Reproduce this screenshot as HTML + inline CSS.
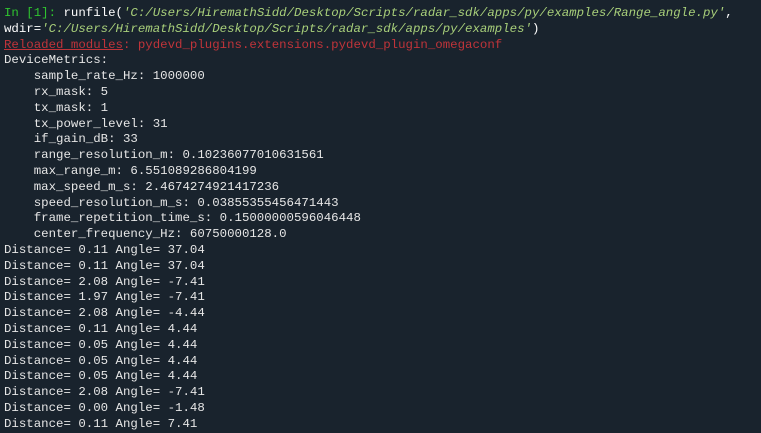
<!DOCTYPE html>
<html><head><style>
html,body{margin:0;padding:0;background:#19232d;width:761px;height:433px;overflow:hidden}
pre{margin:0;padding:6px 0 0 4px;font-family:"Liberation Mono",monospace;font-size:12.4px;line-height:15.8px;color:#e6e6e6;white-space:pre}
.g{color:#2fc42f}.w{color:#fff}.s{color:#a8cf7a;font-style:italic}.r{color:#c0343a}.u{text-decoration:underline}
</style></head><body><pre><span class="g">In [1]:</span> <span class="w">runfile(</span><span class="s">'C:/Users/HiremathSidd/Desktop/Scripts/radar_sdk/apps/py/examples/Range_angle.py'</span><span class="w">,</span>
<span class="w">wdir=</span><span class="s">'C:/Users/HiremathSidd/Desktop/Scripts/radar_sdk/apps/py/examples'</span><span class="w">)</span>
<span class="r"><span class="u">Reloaded modules</span>: pydevd_plugins.extensions.pydevd_plugin_omegaconf</span>
DeviceMetrics:
    sample_rate_Hz: 1000000
    rx_mask: 5
    tx_mask: 1
    tx_power_level: 31
    if_gain_dB: 33
    range_resolution_m: 0.10236077010631561
    max_range_m: 6.551089286804199
    max_speed_m_s: 2.4674274921417236
    speed_resolution_m_s: 0.03855355456471443
    frame_repetition_time_s: 0.15000000596046448
    center_frequency_Hz: 60750000128.0
Distance= 0.11 Angle= 37.04
Distance= 0.11 Angle= 37.04
Distance= 2.08 Angle= -7.41
Distance= 1.97 Angle= -7.41
Distance= 2.08 Angle= -4.44
Distance= 0.11 Angle= 4.44
Distance= 0.05 Angle= 4.44
Distance= 0.05 Angle= 4.44
Distance= 0.05 Angle= 4.44
Distance= 2.08 Angle= -7.41
Distance= 0.00 Angle= -1.48
Distance= 0.11 Angle= 7.41</pre></body></html>
